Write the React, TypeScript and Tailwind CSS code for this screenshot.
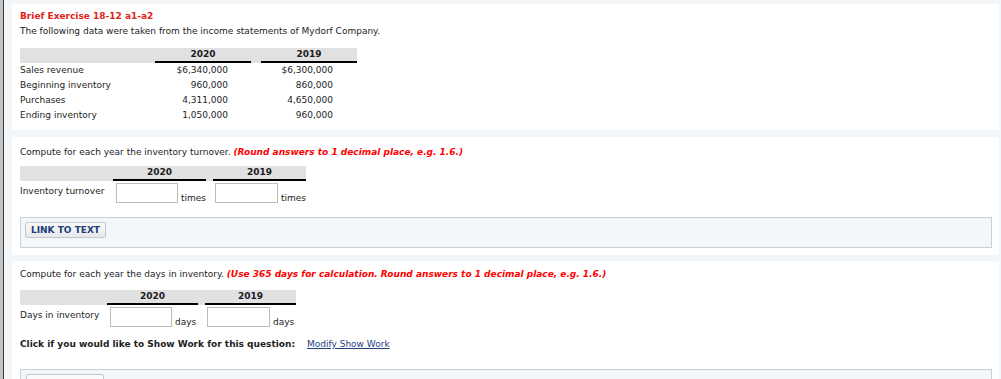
const font = { fontFamily: '"DejaVu Sans", Verdana, sans-serif' }

const data = [
  { label: 'Sales revenue', a: '$6,340,000', b: '$6,300,000' },
  { label: 'Beginning inventory', a: '960,000', b: '860,000' },
  { label: 'Purchases', a: '4,311,000', b: '4,650,000' },
  { label: 'Ending inventory', a: '1,050,000', b: '960,000' },
]

function AnswerRow({ label, unit, cols }: { label: string; unit: string; cols: string }) {
  return (
    <div className={`grid ${cols}`}>
      <div className="h-[15px] bg-[#e1e1e1]" />
      <div className="h-[15px] bg-[#e1e1e1] border-b-2 border-black text-center font-bold leading-[13px]">2020</div>
      <div className="h-[15px] bg-[#e1e1e1]" />
      <div className="h-[15px] bg-[#e1e1e1] border-b-2 border-black text-center font-bold leading-[13px]">2019</div>
      <div className="pt-[3px] leading-[15px]">{label}</div>
      <div className="col-span-2 flex items-end pt-[2px] pl-[3px]">
        <input className="w-[62px] h-[20px] border border-[#bdbdbd] bg-white outline-none" />
        <span className="ml-[3px] leading-[12px] translate-y-[1px]">{unit}</span>
      </div>
      <div className="flex items-end pt-[2px] pl-[2px]">
        <input className="w-[63px] h-[20px] border border-[#bdbdbd] bg-white outline-none" />
        <span className="ml-[3px] leading-[12px] translate-y-[1px]">{unit}</span>
      </div>
    </div>
  )
}

export default function App() {
  return (
    <div className="flex w-[1001px] h-[379px] overflow-hidden text-[9px] text-[#1c1c24]" style={font}>
      <div className="w-[3px] shrink-0 bg-[#c4c4c4]" />
      <div className="w-px shrink-0 bg-[#3a3a3a]" />
      <div className="flex-1 bg-[#f3f6f9] pt-[4px] pl-[8px] pr-[2px] flex flex-col">
        {/* intro card */}
        <div className="shrink-0 bg-white h-[126px] px-[8px] pt-[5px]">
          <div className="leading-[15px] font-bold text-[#e2231a]">Brief Exercise 18-12 a1-a2</div>
          <div className="leading-[15px]">The following data were taken from the income statements of Mydorf Company.</div>
          <div className="mt-[9px] grid grid-cols-[135px_96px_10px_96px] w-[337px]">
            <div className="h-[15px] bg-[#e1e1e1]" />
            <div className="h-[15px] bg-[#e1e1e1] border-b-2 border-black text-center font-bold leading-[13px]">2020</div>
            <div className="h-[15px] bg-[#e1e1e1]" />
            <div className="h-[15px] bg-[#e1e1e1] border-b-2 border-black text-center font-bold leading-[13px]">2019</div>
            {data.map((r) => (
              <div key={r.label} className="contents">
                <div className="leading-[15px]">{r.label}</div>
                <div className="leading-[15px] text-right pr-[23px]">{r.a}</div>
                <div />
                <div className="leading-[15px] text-right pr-[24px]">{r.b}</div>
              </div>
            ))}
          </div>
        </div>

        {/* inventory turnover */}
        <div className="shrink-0 mt-[7px] bg-white h-[118px] px-[8px] pt-[8px] pr-[7px]">
          <div className="leading-[15px]">
            Compute for each year the inventory turnover.{' '}
            <span className="font-bold italic text-[#ff0000]">(Round answers to 1 decimal place, e.g. 1.6.)</span>
          </div>
          <div className="mt-[6px] w-[286px]">
            <AnswerRow label="Inventory turnover" unit="times" cols="grid-cols-[93px_93px_7px_93px]" />
          </div>
          <div className="mt-[14px] h-[31px] border border-[#c7d1dc] bg-[#f4f7fa] pt-[4px] pl-[4px]">
            <button className="h-[16px] px-[5px] rounded-[2px] border border-[#c3c8cf] bg-gradient-to-b from-[#fafafa] to-[#e6e8eb] font-bold text-[#233c7a] leading-[14px]">
              LINK TO TEXT
            </button>
          </div>
        </div>

        {/* days in inventory */}
        <div className="mt-[6px] bg-white flex-1 min-h-0 px-[8px] pt-[6px] pr-[7px]">
          <div className="leading-[15px]">
            Compute for each year the days in inventory.{' '}
            <span className="font-bold italic text-[#ff0000]">
              (Use 365 days for calculation. Round answers to 1 decimal place, e.g. 1.6.)
            </span>
          </div>
          <div className="mt-[8px] w-[276px]">
            <AnswerRow label="Days in inventory" unit="days" cols="grid-cols-[87px_91px_7px_91px]" />
          </div>
          <div className="mt-[10px] leading-[15px] flex">
            <span className="font-bold">Click if you would like to Show Work for this question:</span>
            <a className="ml-[12px] text-[#25407e] underline">Modify Show Work</a>
          </div>
          <div className="mt-[17px] h-[30px] border border-[#c7d1dc] bg-[#f4f7fa] pt-[4px] pl-[5px]">
            <div className="w-[78px] h-[16px] rounded-[2px] border border-[#c3c8cf] bg-[#fafafa]" />
          </div>
        </div>
      </div>
    </div>
  )
}
